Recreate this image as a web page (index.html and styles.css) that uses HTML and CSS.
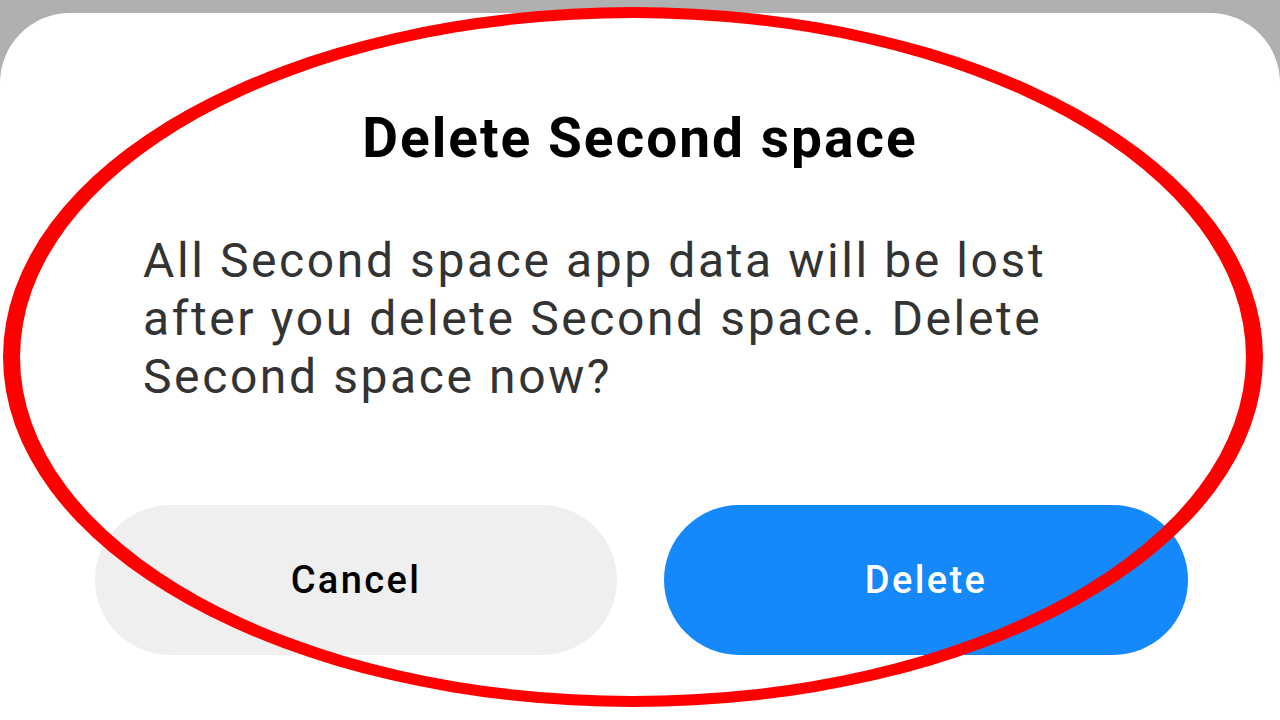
FILE: index.html
```html
<!DOCTYPE html>
<html>
<head>
    <title>Delete Second space</title>
    <link rel="stylesheet" href="styles.css">
</head>
<body>
    <div class="dialog">
        <h2 class="dialog-title">Delete Second space</h2>
        <p class="dialog-message">All Second space app data will be lost after you delete Second space. Delete Second space now?</p>
        <div class="dialog-buttons">
            <button class="btn btn-cancel">Cancel</button>
            <button class="btn btn-delete">Delete</button>
        </div>
    </div>

    <!-- red marker circle drawn over the screenshot (ring: outer ellipse minus inner) -->
    <svg class="marker" width="1280" height="720" viewBox="0 0 1280 720">
        <path fill="#ff0000" fill-rule="evenodd"
              d="M3 357 a630 350 0 1 0 1260 0 a630 350 0 1 0 -1260 0 Z
                 M20 357 a613 339 0 1 0 1226 0 a613 339 0 1 0 -1226 0 Z"/>
    </svg>
</body>
</html>
```

FILE: styles.css
```css
html, body { margin: 0; height: 100%; }
body { background-color: #b0b0b0; font-family: Roboto, "Liberation Sans", sans-serif; overflow: hidden; }
.dialog { margin-top: 13px; height: 707px; background-color: #fff; border-radius: 70px 70px 0 0; padding-top: 93px; box-sizing: border-box; }
.dialog-title { margin: 0; font-size: 55px; line-height: 64px; font-weight: 700; letter-spacing: 2px; color: #000; text-align: center; }
.dialog-message { margin: 62px 0 0 143px; width: 930px; font-size: 48px; line-height: 58px; letter-spacing: 2.6px; color: #333; }
.dialog-buttons { display: flex; gap: 47px; margin: 99px 0 0 95px; }
.btn { height: 150px; border: none; border-radius: 75px; font-family: inherit; font-size: 38px; font-weight: 500; letter-spacing: 2.4px; cursor: pointer; }
.btn-cancel { width: 522px; background-color: #efefef; color: #000; }
.btn-delete { width: 524px; background-color: #1588fa; color: #fff; }
.marker { position: absolute; left: 0; top: 0; pointer-events: none; }
```
